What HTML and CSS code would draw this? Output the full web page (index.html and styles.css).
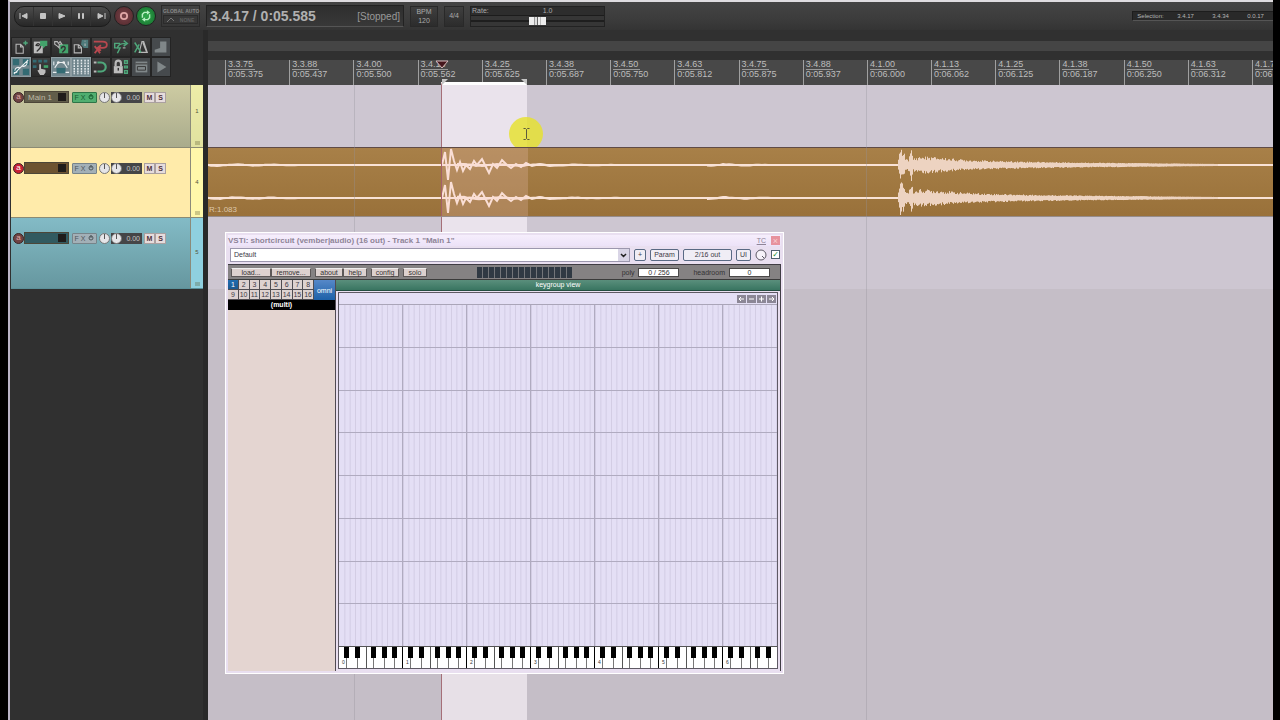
FILE: index.html
```html
<!DOCTYPE html>
<html lang="en">
<head>
  <meta charset="UTF-8" />
  <meta name="viewport" content="width=device-width, initial-scale=1" />
  <title>Project</title>
  <link rel="stylesheet" href="styles.css">
</head>
<body>
  <div class="app">
    <header class="transport">
      <div class="pill">
        <button title="Go to start"><svg viewBox="0 0 12 12"><path d="M2 3v6M9 3.500v5L4 6z" /></svg></button>
        <button title="Stop"><svg viewBox="0 0 12 12"><path d="M3.500 3.500h5v5h-5z" /></svg></button>
        <button title="Play"><svg viewBox="0 0 12 12"><path d="M3 3.500L9 6 3 8.500z" /></svg></button>
        <button title="Pause"><svg viewBox="0 0 12 12"><path d="M3.500 3.500h1v5h-1zM7.500 3.500h1v5h-1z" /></svg></button>
        <button title="Go to end"><svg viewBox="0 0 12 12"><path d="M10 3v6M3 3.500v5L8 6z" /></svg></button>
      </div>
      <button class="round record" title="Record"><svg viewBox="0 0 20 20"><circle cx="10" cy="10" r="3.500" /></svg></button>
      <button class="round repeat" title="Repeat"><svg viewBox="0 0 20 20"><path d="M6 12V8l2-2h4M14 8v4l-2 2H8" /><path class="tip" d="M11 3.500l3.500 2.500L11 8.500zM9 11.500L5.500 14 9 16.500z" /></svg></button>
      <div class="auto">
        <span>GLOBAL AUTO</span>
        <button><svg viewBox="0 0 8 6"><path d="M0 5l4-4 3 3" /></svg>NONE</button>
      </div>
      <div class="clock"><b>3.4.17 / 0:05.585</b><span>[Stopped]</span></div>
      <div class="box bpm"><span>BPM</span><span>120</span></div>
      <div class="box sig">4/4</div>
      <div class="rate">
        <label for="rate"><span>Rate:</span><span class="rate-value">1.0</span></label>
        <input id="rate" type="range" min="0" max="200" value="100">
      </div>
      <div class="selection-info"><span>Selection:</span><span>3.4.17</span><span>3.4.34</span><span>0.0.17</span></div>
    </header>

    <main>
      <aside>
        <div class="toolbar">
          <button title="New project"><svg viewBox="0 0 20 20"><path class="g" d="M4.500 7h5l3 3v7h-8zM9.500 7v3h3" /><path class="n" d="M15 3v5M12.500 5.500h5" /></svg></button>
          <button title="Open project"><svg viewBox="0 0 20 20"><path class="fg" d="M2 4h10v13H2z" /><path class="k" d="M4.500 9c0-4 6-3 5 1-.5 2-3 3-4 5M5 8.500h3" /><path class="fn" d="M9 3h8v6h-2l-3 3V9H9z" /></svg></button>
          <button title="Save project"><svg viewBox="0 0 20 20"><path class="fn" d="M8 7h10v10H8z" /><path class="k" d="M10.500 12c0-4 5-3 4 0-.5 2-2 2-3 4" /><path class="g" d="M3 4h3l1 2 2-2 2 3H8v4L6 9 3 7z" /></svg></button>
          <button title="Project settings"><svg viewBox="0 0 20 20"><path class="g" d="M2.500 7.500h5l3 3v6h-8zM7 8v3h3" /><path class="dim" d="M11 2h7v9h-5l-3-4z" /><path class="g" d="M14.500 3v1M14.500 6v3" /></svg></button>
          <button title="Undo"><svg viewBox="0 0 20 20"><path class="r" d="M2 4h10c6 0 6 7 0 7H7M10 8l-4 3 4 3M3 9l6 8M9 9l-6 8" /></svg></button>
          <button title="Redo"><svg viewBox="0 0 20 20"><path class="n" d="M6 12c0-4 3-6 9-6M13 3l4 3-4 3M9 6H3v5h6l-3 6" /><path class="g" d="M12 11h3" /></svg></button>
          <button title="Metronome"><svg viewBox="0 0 20 20"><path class="g" d="M11 4L8 16h9L13 4zM12 5l4 10" /><path class="n" d="M3 5l7 11M8 7l-5 9" /></svg></button>
          <button class="soft" title="Footswitch"><svg viewBox="0 0 20 20"><path class="fs" d="M9 4h7v12H3v-3l6-2z" /></svg></button>
          <button class="lit" title="Auto-crossfade"><svg viewBox="0 0 20 20"><path class="ft" d="M1 1h7v7H1zM12 12h7v7h-7zM12 1h7v7h-7zM1 12h7v7H1z" /><path class="w" d="M2 18L18 2M3 14c1-4 4-4 6-3M11 9c3 1 6-1 6-5M6 15c-1 2-3 1-4 1" /></svg></button>
          <button title="Grouping"><svg viewBox="0 0 20 20"><path class="ft" d="M1 2h4v3H1zM7 2h4v3H7zM13 2h4v3h-4zM1 8h4v3H1z" /><path class="fn" d="M13 8h5v3h-5z" /><path class="fg" d="M8 7h2v5l5 1v3l-2 3H9l-3-5 2-1z" /></svg></button>
          <button class="lit" title="Envelopes"><svg viewBox="0 0 20 20"><path class="ft" d="M5 11h10v6H5z" /><path class="w" d="M3 11l4-6h6l4 6M2 4v4M18 4v4M1 16h4M15 16h4" /><circle class="fw" cx="7" cy="5" r="1.500" /><circle class="fw" cx="13" cy="5" r="1.500" /></svg></button>
          <button class="lit" title="Grid"><svg viewBox="0 0 20 20"><path class="w dash" d="M2.500 2v16M6.500 2v16M10.500 2v16M14.500 2v16M18 2v16" /></svg></button>
          <button title="Snap"><svg viewBox="0 0 20 20"><path class="n thick" d="M6 5h4c7 0 7 10 0 10H6" /><path class="g thick" d="M2 5h3M2 15h3" /></svg></button>
          <button title="Lock"><svg viewBox="0 0 20 20"><path class="fg" d="M2 9h10v8H2z" /><path class="g thick" d="M4 9V6c0-4 6-4 6 0v3" /><path class="k" d="M7 11v3" /><path class="n" d="M14 3h3v3h-3zM14 9h3v2h-3zM14 14h3v3h-3z" /></svg></button>
          <button class="soft" title="Media explorer"><svg viewBox="0 0 20 20"><path class="fs" d="M4 4h13v12H4z" /><path class="k thin" d="M4 6.500h13M6 9.500h9v4H6z" /></svg></button>
          <button class="soft" title="Preview"><svg viewBox="0 0 20 20"><path class="fs" d="M6 4l10 6-10 6z" /></svg></button>
        </div>
        <div class="tracks" id="tracks"></div>
      </aside>

      <section class="arrange">
        <div class="overview"></div>
        <div class="ruler" id="ruler"></div>
        <div class="lanes">
          <div class="lane first"></div>
          <div class="lane item">
            <svg class="wave" id="wave" viewBox="0 0 1065 68" preserveAspectRatio="none"></svg>
            <span>R:1.083</span>
          </div>
          <div class="lane third"></div>
          <div class="beat-line beat-3"></div>
          <div class="beat-line beat-4"></div>
          <div class="time-selection"></div>
          <svg class="edit-marker" viewBox="0 0 14 10"><path d="M1 1h12L7 8z" /></svg>
          <svg class="pointer" viewBox="0 0 34 34"><circle cx="17" cy="17" r="17" /><path d="M14.500 11.500h2l1 1 1-1h2M14.500 22.500h2l1-1 1 1h2M17.500 12.500v9" /></svg>

          <div class="plugin">
            <div class="title"><b>VSTi: shortcircuit (vember|audio) (16 out) - Track 1 "Main 1"</b><button class="pin" title="Pin">TC</button><button class="close" title="Close">×</button></div>
            <div class="preset">
              <select aria-label="Preset"><option>Default</option></select>
              <button>+</button>
              <button class="param">Param</button>
              <button class="outs">2/16 out</button>
              <button>UI</button>
              <svg viewBox="0 0 12 12"><circle cx="6" cy="6" r="5" /><path d="M7 7l2 2" /></svg>
              <input type="checkbox" aria-label="Enabled" checked>
            </div>
            <div class="synth">
              <div class="synth-bar">
                <div class="pair"><button class="wide">load...</button><button class="wide">remove...</button></div>
                <div class="pair"><button class="mid">about</button><button>help</button></div>
                <button class="mid">config</button>
                <button>solo</button>
                <div class="meter"></div>
                <label for="poly">poly</label><input id="poly" value="0 / 256">
                <label for="headroom">headroom</label><input id="headroom" value="0">
              </div>
              <div class="synth-body">
                <div class="parts">
                  <div class="channels"><div class="channel-grid" id="channels"></div><button class="omni">omni</button></div>
                  <div class="multi">(multi)</div>
                </div>
                <div class="keygroups">
                  <div class="keygroup-title">keygroup view</div>
                  <div class="zone">
                    <div class="zone-tools">
                      <button title="Left"><svg viewBox="0 0 9 8"><path d="M7 4H2M4 2L2 4l2 2" /></svg></button>
                      <button title="Zoom out"><svg viewBox="0 0 9 8"><path d="M2 4h5" /></svg></button>
                      <button title="Zoom in"><svg viewBox="0 0 9 8"><path d="M2 4h5M4.500 1.500v5" /></svg></button>
                      <button title="Right"><svg viewBox="0 0 9 8"><path d="M2 4h5M5 2l2 2-2 2" /></svg></button>
                    </div>
                    <svg class="zone-grid" id="zone-grid"></svg>
                    <svg class="keys" id="keys"></svg>
                  </div>
                </div>
              </div>
            </div>
          </div>
        </div>
      </section>
    </main>
  </div>
  <script src="script.js"></script>
</body>
</html>
```
FILE: styles.css
```css
* {
  box-sizing: border-box;
}
body {
  margin: 0;
  background: #000;
  color: #aaa;
  font-family: "Liberation Sans", Arial, sans-serif;
  font-size: 9px;
}
button, input, select {
  margin: 0;
  padding: 0;
  border: none;
  font: inherit;
  color: inherit;
}
button {
  display: flex;
  align-items: center;
  justify-content: center;
}
svg {
  display: block;
}
.app {
  display: flex;
  flex-direction: column;
  height: 100vh;
  margin: 0 7px 0 8px;
  border-top: 2px solid #dedce0;
  border-left: 2px solid #bbb5c8;
  background: #303030;
  overflow: hidden;
}

/* transport */
.transport {
  display: flex;
  align-items: center;
  flex: 0 0 28px;
  gap: 6px;
  padding-left: 4px;
  background: linear-gradient(#444, #3c3c3c 60%, #343434);
}
.pill {
  display: flex;
  height: 21px;
  border: 1px solid #1c1c1c;
  border-radius: 10px;
  background: linear-gradient(#4c4c4c, #272727);
}
.pill button {
  width: 19px;
  background: none;
  border-right: 1px solid #333;
}
.pill button:last-child {
  border-right: none;
}
.pill svg {
  width: 12px;
  height: 12px;
  fill: #c4c4c4;
  stroke: #c4c4c4;
  stroke-width: 1;
}
.round {
  width: 20px;
  height: 20px;
  margin-right: -4px;
  border: 1px solid #222;
  border-radius: 50%;
}
.round svg {
  width: 18px;
  height: 18px;
  fill: none;
}
.record {
  margin-left: -3px;
  background: radial-gradient(#774248, #52282c);
}
.record svg {
  stroke: #dfa6a6;
  stroke-width: 2;
}
.repeat {
  margin-right: -1px;
  background: radial-gradient(#2faa4c, #156a2c);
}
.repeat svg {
  stroke: #b8f0c4;
  stroke-width: 1.6;
}
.repeat .tip {
  fill: #b8f0c4;
  stroke: none;
}
.auto {
  width: 39px;
  height: 22px;
  padding: 2px 1px 0;
  border: 1px solid #2a2a2a;
  font-size: 5px;
  font-weight: bold;
  color: #888;
  white-space: nowrap;
}
.auto span {
  display: block;
  text-align: center;
  line-height: 7px;
}
.auto button {
  gap: 5px;
  width: 100%;
  height: 9px;
  border: 1px solid #2b2b2b;
  background: #383838;
  color: #5e5e5e;
}
.auto svg {
  width: 8px;
  height: 6px;
  fill: none;
  stroke: #777;
}
.clock {
  display: flex;
  align-items: center;
  justify-content: space-between;
  width: 198px;
  height: 22px;
  padding: 0 3px;
  border: 1px solid #222;
  border-bottom-color: #555;
  background: linear-gradient(#2e2e2e, #383838);
  font-size: 10px;
  color: #999;
}
.clock b {
  font-size: 14px;
  color: #b0b0b0;
}
.box {
  display: flex;
  flex-direction: column;
  align-items: center;
  justify-content: space-evenly;
  height: 21px;
  border: 1px solid #292929;
  background: linear-gradient(#3f3f3f, #2c2c2c);
  font-size: 7px;
  line-height: 8px;
}
.bpm {
  width: 28px;
}
.sig {
  width: 20px;
}
.rate {
  width: 135px;
  height: 21px;
  border: 1px solid #222;
  background: #2d2d2d;
  font-size: 7px;
}
.rate label {
  display: flex;
  height: 9px;
  padding: 0 1px;
  border-bottom: 1px solid #1c1c1c;
  line-height: 8px;
}
.rate-value {
  flex: 1;
  padding-left: 54px;
}
.rate input {
  display: block;
  appearance: none;
  width: 100%;
  height: 10px;
  background: linear-gradient(#363636 4px, #1e1e1e 4px, #1e1e1e 6px, #363636 6px);
}
.rate input::-webkit-slider-thumb {
  appearance: none;
  width: 17px;
  height: 8px;
  background: linear-gradient(90deg, #eee 5px, #999 5px, #999 6px, #ddd 6px, #ddd 8px, #666 8px, #666 9px, #eee 9px, #eee 11px, #bbb 11px, #bbb 12px, #eee 12px);
}
.selection-info {
  display: flex;
  width: 141px;
  height: 10px;
  margin-left: auto;
  border: 1px solid #1d1d1d;
  border-right: none;
  border-bottom-color: #555;
  background: #292929;
  font-size: 6px;
  line-height: 8px;
}
.selection-info span {
  flex: 1;
  text-align: center;
  color: #b5b5b5;
}

main {
  display: flex;
  flex: 1;
  min-height: 0;
}
aside {
  flex: 0 0 198px;
  padding-left: 1px;
  border-right: 5px solid #292929;
}
.toolbar {
  display: grid;
  grid-template-columns: repeat(8, 20px);
  grid-auto-rows: 20px;
  padding: 7px 0 8px;
}
.toolbar button {
  border: 1px solid #242424;
  background: linear-gradient(#404040, #2b2b2b);
}
.toolbar .lit {
  border-color: #8e9da2;
  background: #71868d;
}
.toolbar .soft {
  background: #464a4d;
}
.toolbar svg {
  width: 18px;
  height: 18px;
  fill: none;
}
.g, .w, .n, .r, .k {
  stroke: #b8b8b8;
  stroke-width: 1.2;
}
.w { stroke: #e9eef0; }
.n { stroke: #4fa77b; stroke-width: 1.6; }
.r { stroke: #b8484f; stroke-width: 2; }
.k { stroke: #333; stroke-width: 1.6; }
.fg { fill: #bcbcbc; }
.fn { fill: #43a36b; }
.fs { fill: #808789; }
.ft { fill: #336b73; }
.fw { fill: #eee; }
.dim { fill: #4f7b7c; }
.thick { stroke-width: 2.4; }
.thin { stroke-width: 1; }
.dash { stroke-width: 1.6; stroke-dasharray: 2 1; }

/* track panels */
.track {
  display: flex;
  height: 71px;
  border-bottom: 1px solid #8b8b74;
}
.track-controls {
  display: flex;
  align-items: center;
  flex: 1;
  height: 12px;
  margin-top: 14px;
  padding-left: 2px;
}
.olive {
  height: 63px;
  background: linear-gradient(#cdcba2, #a9ab8c);
}
.olive .track-controls {
  margin-top: 6px;
}
.yellow {
  height: 70px;
  background: #ffebaa;
}
.blue {
  border-color: #5b9099;
  background: linear-gradient(#83bbc6, #66979f);
}
.arm {
  width: 11px;
  height: 11px;
  border: 1px solid #3b2424;
  border-radius: 50%;
  background: #6f4444;
  color: #e0aaaa;
  font-size: 8px;
  line-height: 8px;
}
.yellow .arm {
  background: #c82035;
  color: #fff;
}
.name {
  display: flex;
  align-items: center;
  width: 45px;
  height: 12px;
  margin-right: 3px;
  padding-right: 2px;
  border: 1px solid #4c4638;
  background: #615d4a;
}
.name input {
  width: 33px;
  padding-left: 3px;
  background: none;
  color: #bdb9a4;
  font-size: 8px;
}
.name i {
  width: 8px;
  height: 8px;
  background: #1f1c1a;
}
.yellow .name { background: #6d5331; }
.blue .name { background: #315a60; }
.fx {
  width: 25px;
  height: 11px;
  border: 1px solid #77848a;
  border-radius: 1px;
  background: #a3b0b7;
  color: #4d575b;
  font-size: 7px;
  gap: 3px;
}
.fx svg {
  width: 6px;
  height: 6px;
  fill: none;
  stroke: currentColor;
}
.olive .fx {
  border-color: #2d7447;
  background: #50ae70;
  color: #175d30;
}
.knob,
.volume i {
  flex: none;
  width: 11px;
  height: 11px;
  border: 1px solid #777;
  border-radius: 50%;
  background: linear-gradient(#555, #555) 4px 0 / 1px 5px no-repeat #e5e5e8;
}
.knob {
  margin: 0 1px 0 2px;
}
.volume {
  display: flex;
  align-items: center;
  justify-content: space-between;
  width: 31px;
  height: 11px;
  margin-right: 2px;
  padding-right: 2px;
  background: #454547;
  color: #c5c5c5;
  font-size: 7px;
}
.ms {
  width: 11px;
  height: 11px;
  border: 1px solid #aaa0a0;
  background: #e6dcdc;
  color: #4e3038;
  font-size: 7px;
  font-weight: bold;
}
.strip {
  display: flex;
  flex-direction: column;
  align-items: center;
  justify-content: space-between;
  width: 13px;
  padding: 23px 0 2px;
  border-left: 1px solid #8b8b7a;
  background: rgba(255, 255, 170, 0.65);
  color: #54533b;
  font-size: 6px;
}
.yellow .strip { padding-top: 31px; }
.blue .strip {
  padding-top: 31px;
  background: #8fd0df;
}
.strip i {
  width: 5px;
  height: 4px;
  background: rgba(90, 90, 50, 0.3);
}

/* arrange view */
.arrange {
  display: flex;
  flex-direction: column;
  flex: 1;
  min-width: 0;
  padding-top: 11px;
}
.overview {
  flex: 0 0 10px;
  margin-bottom: 9px;
  background: #454545;
}
.ruler {
  display: flex;
  flex: 0 0 25px;
  padding-left: 17px;
  background: #484848;
  overflow: hidden;
}
.tick {
  flex: 0 0 6.125%;
  padding-left: 2px;
  border-left: 1px solid #a0a0a0;
  color: #bdbdbd;
  line-height: 9px;
}
.tick span {
  display: block;
  width: 27px;
  border-bottom: 1px solid #999;
}
.lanes {
  position: relative;
  flex: 1;
  background: #c5bec7;
}
.lane {
  height: 72px;
  background: #cdc6d1;
}
.first {
  height: 62px;
}
.item {
  position: relative;
  z-index: 1;
  display: flex;
  align-items: flex-end;
  height: 70px;
  border-top: 1px solid #5f4b46;
  border-bottom: 1px solid #968c8a;
  background: linear-gradient(#a88048, #99713a);
  color: #ddc7aa;
  font-size: 8px;
}
.item::after {
  content: "";
  position: absolute;
  top: 0;
  bottom: 0;
  left: 21.9%;
  width: 8.1%;
  border-left: 1px solid #a5606a;
  background: rgba(255, 210, 210, 0.2);
}
.item span {
  padding: 0 0 2px 1px;
}
.wave {
  width: 100%;
  height: 68px;
  margin-right: -100%;
}
.wave path {
  fill: none;
  stroke: #f9e2d6;
}
.wave .burst {
  stroke: #edd3c1;
}
.wave .tail {
  stroke-width: 2;
}
.beat-line {
  position: absolute;
  z-index: 1;
  top: 0;
  bottom: 0;
  border-left: 1px solid rgba(150, 145, 155, 0.35);
}
.beat-3 { left: 13.7%; }
.beat-4 { left: 61.8%; }
.time-selection {
  position: absolute;
  top: -3px;
  bottom: 0;
  left: 21.9%;
  width: 8.1%;
  border-top: 3px solid #fff;
  border-left: 1px solid #a56f78;
  background: rgba(255, 248, 255, 0.58);
}
.time-selection::before,
.time-selection::after {
  content: "";
  position: absolute;
  top: -6px;
  left: 0;
  border-top: 6px solid #c5c5c5;
  border-right: 6px solid transparent;
}
.time-selection::after {
  right: 0;
  left: auto;
  border-right: none;
  border-left: 6px solid transparent;
}
.edit-marker {
  position: absolute;
  top: -25px;
  left: 21.3%;
  width: 14px;
  height: 10px;
  fill: #45161c;
  stroke: #d5b9bb;
}
.pointer {
  position: absolute;
  top: 32px;
  left: 28.3%;
  width: 34px;
  height: 34px;
  fill: rgba(230, 226, 45, 0.82);
  stroke: none;
}
.pointer path {
  fill: none;
  stroke: #5d5b3c;
}

/* plugin window */
.plugin {
  position: absolute;
  z-index: 2;
  top: 147px;
  left: 17px;
  width: 559px;
  padding: 2px;
  border: 1px solid #fff;
  background: #e9dff0;
  color: #3d3946;
  font-size: 7px;
}
.title {
  display: flex;
  align-items: center;
  gap: 5px;
  height: 11px;
  color: #8e8497;
  background: linear-gradient(#f6eefc, #ece2f8);
}
.title b {
  flex: 1;
  font-size: 8px;
}
.pin {
  background: none;
  text-decoration: underline;
}
.close {
  width: 9px;
  height: 9px;
  margin-right: 1px;
  background: #e7929d;
  color: #f8cdd0;
  font-size: 9px;
}
.preset {
  display: flex;
  align-items: center;
  gap: 4px;
  height: 18px;
  padding: 1px 0 2px 2px;
}
.preset select {
  flex: 1;
  appearance: none;
  height: 14px;
  padding-left: 3px;
  border: 1px solid #9c97ae;
  background: #fff url("data:image/svg+xml,%3Csvg xmlns='http://www.w3.org/2000/svg' width='11' height='12'%3E%3Cpath fill='%23d9d5e6' d='M0 0h11v12H0z'/%3E%3Cpath fill='none' stroke='%23222' stroke-width='1.500' d='M3 5l2.500 2.500L8 5'/%3E%3C/svg%3E") no-repeat right center;
}
.preset button {
  min-width: 11px;
  height: 12px;
  padding: 0 3px;
  border: 1px solid #596984;
  border-radius: 2px;
  background: #f0edf5;
}
.preset .param {
  width: 29px;
}
.preset .outs {
  width: 49px;
}
.preset svg {
  width: 12px;
  height: 12px;
  fill: #f7f3fa;
  stroke: #5d5965;
}
.preset input {
  display: grid;
  place-items: center;
  appearance: none;
  width: 9px;
  height: 9px;
  margin-right: 1px;
  border: 1px solid #50606e;
  background: #fff;
}
.preset input::before {
  content: "✓";
  color: #168a2c;
  font: bold 8px/7px "DejaVu Sans", sans-serif;
}
.synth {
  border: 1px solid #403d44;
  border-bottom: none;
  border-left: none;
}
.synth-bar {
  display: flex;
  align-items: center;
  gap: 4px;
  height: 15px;
  padding: 0 10px 0 3px;
  border-bottom: 1px solid #3b3b3b;
  background: #858283;
  color: #343234;
}
.pair {
  display: flex;
}
.synth-bar button {
  width: 24px;
  height: 9px;
  border: 1px solid #5d5858;
  border-top-color: #eee;
  background: #ddd1cf;
}
.synth-bar .wide {
  width: 40px;
}
.synth-bar .mid {
  width: 28px;
}
.meter {
  width: 95px;
  height: 11px;
  margin: 0 auto;
  background: repeating-linear-gradient(90deg, #303943 0 5px, #737579 5px 6px);
}
.synth-bar input {
  width: 41px;
  height: 9px;
  border: 1px solid #4b4949;
  background: #fff;
  text-align: center;
}
.synth-bar label[for="headroom"] {
  margin-left: 10px;
}
.synth-body {
  display: flex;
}
.parts {
  width: 108px;
  border-right: 1px solid #504b53;
  background: #e4d5d1;
}
.channels {
  display: flex;
}
.channel-grid {
  display: grid;
  grid-template-columns: repeat(8, 1fr);
  grid-auto-rows: 10px;
  flex: 1;
}
.channel-grid button {
  border: 1px solid #4f4d52;
  border-top: none;
  border-left: none;
  background: #ddd2d0;
}
.channel-grid .active {
  background: linear-gradient(#1e6cb0, #1d5990);
  color: #fff;
}
.omni {
  width: 21px;
  background: linear-gradient(#5688c8, #1d61a8);
  color: #fff;
}
.multi {
  height: 10px;
  background: #000;
  color: #fff;
  font-weight: bold;
  line-height: 9px;
  text-align: center;
}
.keygroups {
  flex: 1;
  min-width: 0;
}
.keygroup-title {
  height: 11px;
  border-bottom: 1px solid #244d41;
  background: linear-gradient(#5a8f7c, #397561);
  color: #fff;
  line-height: 10px;
  text-align: center;
}
.zone {
  margin: 1px 2px 2px;
  border: 1px solid #5e5964;
  background: #e4dff5;
}
.zone-tools {
  display: flex;
  justify-content: flex-end;
  align-items: center;
  gap: 1px;
  height: 11px;
  padding-right: 1px;
}
.zone-tools button {
  width: 9px;
  height: 8px;
  background: #8c8796;
}
.zone-tools svg {
  width: 9px;
  height: 8px;
  fill: none;
  stroke: #fff;
}
.zone-grid {
  width: 100%;
  height: 342px;
  border-top: 1px solid #aaa5b8;
  background: #e4dff5;
}
.zone-grid .semitone {
  fill: #d3cde4;
}
.zone-grid .major {
  fill: #b0abc0;
}
.keys {
  width: 100%;
  height: 22px;
  background: #fff;
}
.keys text {
  font-size: 5px;
  fill: #333;
}
```
FILE: script.js
```js
const tracks = [
  { color: "olive", name: "Main 1", number: 1 },
  { color: "yellow", name: "", number: 4 },
  { color: "blue", name: "", number: 5 },
];

document.getElementById("tracks").innerHTML = tracks
  .map(
    (t) => `
  <div class="track ${t.color}">
    <div class="track-controls">
      <button class="arm" title="Record arm">a</button>
      <div class="name"><input aria-label="Track name" value="${t.name}"><i></i></div>
      <button class="fx"><span>F X</span><svg viewBox="0 0 6 6"><circle cx="3" cy="3" r="2" /><path d="M3 0v3" /></svg></button>
      <div class="knob"></div>
      <div class="volume"><i></i>0.00</div>
      <button class="ms">M</button><button class="ms">S</button>
    </div>
    <div class="strip">${t.number}<i></i></div>
  </div>`
  )
  .join("");

const ticks = [
  ["3.3.75", "0:05.375"], ["3.3.88", "0:05.437"], ["3.4.00", "0:05.500"],
  ["3.4.13", "0:05.562"], ["3.4.25", "0:05.625"], ["3.4.38", "0:05.687"],
  ["3.4.50", "0:05.750"], ["3.4.63", "0:05.812"], ["3.4.75", "0:05.875"],
  ["3.4.88", "0:05.937"], ["4.1.00", "0:06.000"], ["4.1.13", "0:06.062"],
  ["4.1.25", "0:06.125"], ["4.1.38", "0:06.187"], ["4.1.50", "0:06.250"],
  ["4.1.63", "0:06.312"], ["4.1.75", "0:06.375"],
];

document.getElementById("ruler").innerHTML = ticks
  .map(([beat, time]) => `<div class="tick"><span>${beat}</span>${time}</div>`)
  .join("");

document.getElementById("channels").innerHTML = Array.from(
  { length: 16 },
  (_, i) => `<button${i === 0 ? ' class="active"' : ""}>${i + 1}</button>`
).join("");

// Waveform: [x, offset from the centre line] of the first hit
const hit = [
  [234, 0], [237, -13], [240, 15], [243, -16], [246, -4], [249, 5], [252, -3],
  [255, 6], [258, 0], [262, 4], [266, -4], [269, 0], [274, -6], [278, 2],
  [281, 8], [285, -1], [289, 3], [294, -5], [299, 0], [303, 3], [308, -1],
  [313, 2], [318, -2], [324, 1], [332, -1], [342, 1], [350, 0],
];
// Height of the second hit
const decay = [
  [690, 5], [692, 16], [695, 14], [697, 7], [700, 5], [703, 15], [705, 6],
  [712, 8], [730, 7], [750, 5], [780, 3.5], [820, 2.5], [880, 1.5], [1010, 0],
];

function heightAt(x) {
  for (let i = 1; i < decay.length; i++) {
    const [x0, h0] = decay[i - 1];
    const [x1, h1] = decay[i];
    if (x <= x1) return h0 + ((h1 - h0) * (x - x0)) / (x1 - x0);
  }
  return 0;
}

// same value for the same seed, so that the wave looks alike on every load
function noise(seed) {
  const n = Math.sin(seed * 12.9898) * 43758.5453;
  return n - Math.floor(n);
}

function channel(mid) {
  let svg = `<path class="tail" d="M0 ${mid}H1065" />`;
  svg += `<path class="tail" d="M${hit.map(([x, y]) => `${x} ${mid + y}`).join("L")}" />`;

  // small ripples left over from the earlier notes
  for (const [from, to] of [[0, 110], [250, 435], [500, 575], [910, 980]]) {
    let d = `M${from} ${mid}`;
    for (let x = from; x < to; x += 3) {
      const fade = 1 - (x - from) / (to - from);
      d += `L${x} ${(mid + (Math.sin(x / 6) + noise(x + mid) - 0.5) * fade).toFixed(1)}`;
    }
    svg += `<path class="tail" d="${d}" />`;
  }

  let bars = "";
  for (let x = 690; x < 1010; x++) {
    const h = heightAt(x);
    const up = h * (0.5 + 0.5 * noise(x + mid)) + 1;
    const down = h * (0.5 + 0.5 * noise(x * 3 + mid)) + 1;
    bars += `M${x + 0.5} ${(mid - up).toFixed(1)}V${(mid + down).toFixed(1)}`;
  }
  return svg + `<path class="burst" d="${bars}" />`;
}

document.getElementById("wave").innerHTML = channel(17) + channel(50);

const semitone = 64 / 12;

// Zone grid: faint line per three to the octave part, strong line per octave
let grid = "";
for (let i = 1; i < 83; i++) {
  grid += `<rect class="semitone" x="${i * semitone}" y="0" width="1" height="342" />`;
}
for (let octave = 1; octave < 7; octave++) {
  grid += `<rect class="major" x="${octave * 64 - 1}" y="0" width="1" height="342" />`;
}
for (let row = 1; row < 8; row++) {
  grid += `<rect class="major" x="0" y="${Math.round((row * 342) / 8) - 1}" width="100%" height="1" />`;
}
document.getElementById("zone-grid").innerHTML = grid;

// Keyboard: every semitone has the same width, seven octaves up to G
let keys = "";
for (let octave = 0; octave < 7; octave++) {
  const x = octave * 64;
  for (const n of [1, 3, 6, 8, 10]) {
    if (octave === 6 && n === 10) continue;
    const left = x + n * semitone;
    keys += `<rect x="${Math.round(left + 2)}" y="0" width="1" height="22" fill="#777" />`;
    keys += `<rect x="${Math.round(left)}" y="0" width="5" height="12" />`;
  }
  keys += `<rect x="${Math.round(x + 5 * semitone)}" y="0" width="1" height="22" fill="#555" />`;
  if (octave < 6) keys += `<rect x="${x + 63}" y="0" width="1" height="22" />`;
  keys += `<text x="${x + 3}" y="18">${octave}</text>`;
}
keys += '<rect x="0" y="0" width="100%" height="1" fill="#555" />';
document.getElementById("keys").innerHTML = keys;
```
